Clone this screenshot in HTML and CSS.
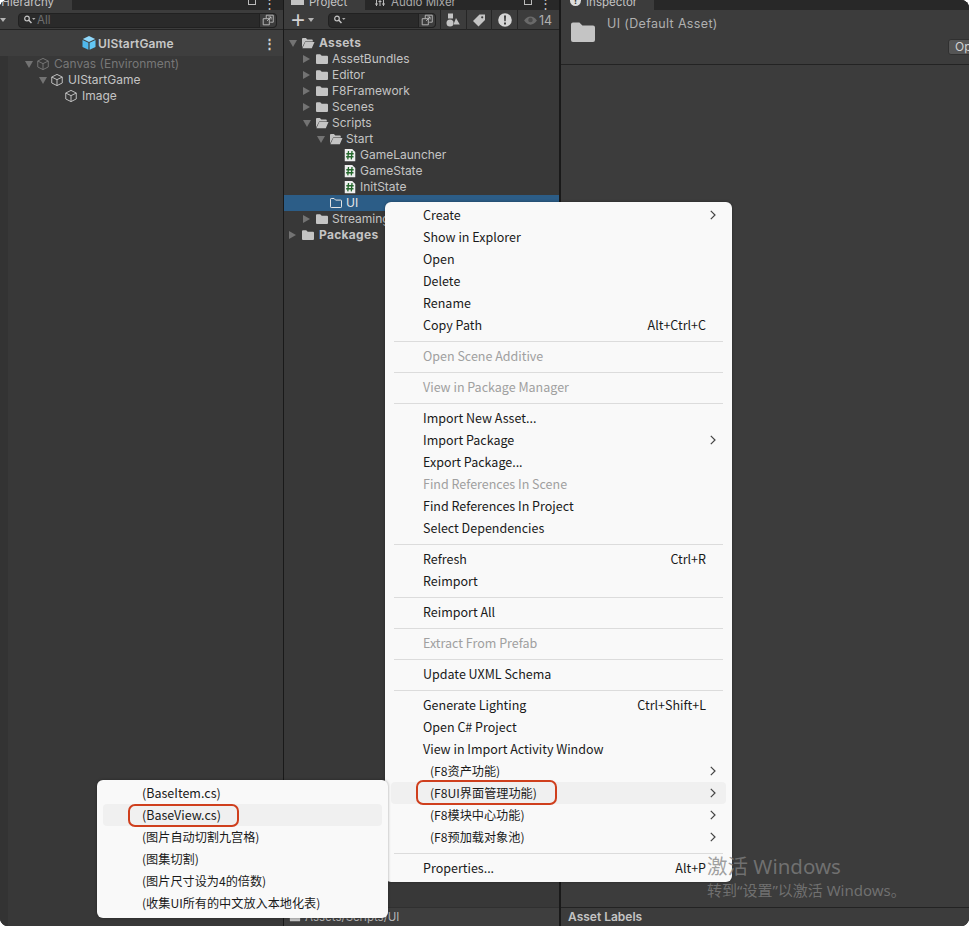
FILE: index.html
```html
<!DOCTYPE html>
<html lang="zh-CN">
<head>
<meta charset="utf-8">
<title>Unity Editor</title>
<link rel="stylesheet" href="styles.css">
</head>
<body>
<svg class="defs" width="0" height="0" aria-hidden="true">
  <defs>
    <symbol id="folder" viewBox="0 0 14 14"><path d="M1 3.2a1 1 0 0 1 1-1h3.2l1.5 1.6H12a1 1 0 0 1 1 1V11a1 1 0 0 1-1 1H2a1 1 0 0 1-1-1z" fill="#c4c4c4"/></symbol>
    <symbol id="folder-open" viewBox="0 0 14 14"><path d="M1 11.6V3a.9.9 0 0 1 .9-.9h3l1.4 1.5h4.6a.9.9 0 0 1 .9.9v.9H4.2zM1.4 12.2l2.9-6.2h9.2l-2.7 6.2z" fill="#c4c4c4"/></symbol>
    <symbol id="folder-line" viewBox="0 0 14 14"><path d="M1.5 3.2a.7.7 0 0 1 .7-.7h2.900l1.500 1.600h5.200a.7.7 0 0 1 .7.7v6a.7.7 0 0 1-.7.7H2.200a.7.7 0 0 1-.7-.7z" fill="none" stroke="#e4e4e4" stroke-width="1"/></symbol>
    <symbol id="cube" viewBox="0 0 16 16"><path d="M8 1.600l6 3v6.800l-6 3-6-3V4.600zM2 4.600l6 3 6-3M8 7.600v6.800" fill="none" stroke="currentColor" stroke-width="1.100" stroke-linejoin="round"/></symbol>
    <symbol id="cube-solid" viewBox="0 0 16 16"><path d="M8 1l6.200 2.900L8 6.900 1.800 3.900z" fill="#8fd8fb"/><path d="M1.500 4.900l5.900 2.900v7L1.500 11.900z" fill="#4fb8ec"/><path d="M14.500 4.900L8.600 7.800v7l5.900-2.900z" fill="#62c6f5"/></symbol>
    <symbol id="script" viewBox="0 0 14 16"><path d="M1 1h8.500L13 4.500V15H1z" fill="#efefef"/><path d="M5.300 3.500L4.500 13M9.300 3.500L8.500 13M2.800 6.600h8.400M2.600 10h8.400" stroke="#25682c" stroke-width="1.500" fill="none"/></symbol>
    <symbol id="linkbox" viewBox="0 0 16 16"><path d="M6 2.500h8v8H10.500M6 2.500V6M2.500 6.500h7v7h-7z" fill="none" stroke="#c4c4c4" stroke-width="1"/><path d="M7 9l4.500-4.500M8.500 4.500h3v3" fill="none" stroke="#c4c4c4" stroke-width="1"/></symbol>
    <symbol id="lens" viewBox="0 0 14 12"><circle cx="5" cy="4.500" r="2.300" fill="none" stroke="#c4c4c4" stroke-width="1.200"/><path d="M6.800 6.300l2.700 2.700" stroke="#c4c4c4" stroke-width="1.500"/><path d="M10 4h3.500l-1.750 2z" fill="#aaa"/></symbol>
    <symbol id="chev" viewBox="0 0 8 12"><path d="M1.800 1.800L6 6l-4.200 4.200" fill="none" stroke="#444" stroke-width="1.200"/></symbol>
  </defs>
</svg>

<div class="app">
  <section class="panel hierarchy">
    <header class="tabbar">
      <div class="tab tab-hierarchy"><span class="tab-label">Hierarchy</span></div>
      <div class="tab-spacer"></div>
      <span class="win-btn"></span><span class="kebab">⋮</span>
    </header>
    <div class="toolbar">
      <span class="drop-tri"></span>
      <div class="search search-wide">
        <svg class="lens"><use href="#lens"/></svg><span class="search-hint">All</span>
        <span class="search-end"><svg class="ic13"><use href="#linkbox"/></svg></span>
      </div>
    </div>
    <div class="scene-head">
      <svg class="ic16"><use href="#cube-solid"/></svg>
      <span class="scene-title">UIStartGame</span>
      <span class="scene-kebab">⋮</span>
    </div>
    <div class="tree-wrap">
      <div class="gutter"></div>
      <ul class="tree">
        <li class="row in-1 muted"><span class="tri down"></span><svg class="ic14"><use href="#cube"/></svg><span>Canvas (Environment)</span></li>
        <li class="row in-2"><span class="tri down"></span><svg class="ic14"><use href="#cube"/></svg><span>UIStartGame</span></li>
        <li class="row in-3"><svg class="ic14"><use href="#cube"/></svg><span>Image</span></li>
      </ul>
    </div>
  </section>

  <section class="panel project">
    <header class="tabbar">
      <div class="tab tab-project"><span class="tab-folder"></span><span class="tab-label">Project</span></div>
      <div class="tab-inactive">
        <svg class="mixer" viewBox="0 0 10 6"><path d="M1.500 0v6M5 0v6M8.500 0v6" stroke="#bbb" stroke-width="1"/><path d="M0 4h3M3.500 1.500h3M7 4h3" stroke="#bbb" stroke-width="1.200"/></svg>
        <span class="tab-label">Audio Mixer</span>
      </div>
      <div class="tab-spacer"></div>
      <span class="win-btn"></span><span class="kebab">⋮</span>
    </header>
    <div class="toolbar project-tools">
      <span class="plus">+</span><span class="drop-tri small"></span>
      <div class="search search-project">
        <svg class="lens"><use href="#lens"/></svg>
        <span class="search-end"><svg class="ic13"><use href="#linkbox"/></svg></span>
      </div>
      <div class="tool-btn"><svg class="ic16" viewBox="0 0 16 16"><circle cx="5" cy="11" r="3.500" fill="#c4c4c4"/><path d="M3 1.500h5v5H3z" fill="#c4c4c4"/><path d="M11 6l3.800 6.500H8.500z" fill="#c4c4c4"/></svg></div>
      <div class="tool-btn"><svg class="ic16" viewBox="0 0 16 16"><path d="M2 9l6.500-6.500H14V8l-6.500 6.500z" fill="#c4c4c4"/><circle cx="11.200" cy="5.300" r="1.100" fill="#3c3c3c"/></svg></div>
      <div class="tool-btn"><svg class="ic16" viewBox="0 0 16 16"><circle cx="8" cy="8" r="6.800" fill="#d6d6d6"/><path d="M7 3.500h2l-.3 5.800H7.300zM7 10.500h2v2H7z" fill="#3c3c3c"/></svg></div>
      <div class="eye-count">
        <svg class="eye" viewBox="0 0 16 12"><path d="M1 6c2-3 4.300-4.500 7-4.500S13 3 15 6c-2 3-4.300 4.500-7 4.500S3 9 1 6z" fill="#6a6a6a"/><circle cx="8" cy="5.500" r="2.500" fill="#4a4a4a"/></svg>
        <span>14</span>
      </div>
    </div>
    <ul class="tree project-tree">
      <li class="row p-0 strong"><span class="tri down"></span><svg class="ic14"><use href="#folder-open"/></svg><span>Assets</span></li>
      <li class="row p-1"><span class="tri right"></span><svg class="ic14"><use href="#folder"/></svg><span>AssetBundles</span></li>
      <li class="row p-1"><span class="tri right"></span><svg class="ic14"><use href="#folder"/></svg><span>Editor</span></li>
      <li class="row p-1"><span class="tri right"></span><svg class="ic14"><use href="#folder"/></svg><span>F8Framework</span></li>
      <li class="row p-1"><span class="tri right"></span><svg class="ic14"><use href="#folder"/></svg><span>Scenes</span></li>
      <li class="row p-1"><span class="tri down"></span><svg class="ic14"><use href="#folder-open"/></svg><span>Scripts</span></li>
      <li class="row p-2"><span class="tri down"></span><svg class="ic14"><use href="#folder-open"/></svg><span>Start</span></li>
      <li class="row p-3"><svg class="ic14 script"><use href="#script"/></svg><span>GameLauncher</span></li>
      <li class="row p-3"><svg class="ic14 script"><use href="#script"/></svg><span>GameState</span></li>
      <li class="row p-3"><svg class="ic14 script"><use href="#script"/></svg><span>InitState</span></li>
      <li class="row p-2b selected"><svg class="ic14"><use href="#folder-line"/></svg><span>UI</span></li>
      <li class="row p-1"><span class="tri right"></span><svg class="ic14"><use href="#folder"/></svg><span>StreamingAssets</span></li>
      <li class="row p-0 strong"><span class="tri right"></span><svg class="ic14"><use href="#folder"/></svg><span>Packages</span></li>
    </ul>
    <div class="spacer"></div>
    <footer class="pathbar"><svg class="ic12"><use href="#folder"/></svg><span>Assets/Scripts/UI</span></footer>
  </section>

  <section class="panel inspector">
    <header class="tabbar">
      <div class="tab tab-inspector"><span class="info-dot">!</span><span class="tab-label">Inspector</span></div>
      <div class="tab-spacer"></div>
    </header>
    <div class="asset-head">
      <svg class="folder-big"><use href="#folder"/></svg>
      <span class="asset-name">UI (Default Asset)</span>
      <button class="open-btn">Open</button>
    </div>
    <div class="spacer"></div>
    <footer class="labels-bar">Asset Labels</footer>
  </section>
</div>

<nav class="menu menu-main">
  <div class="item"><span>Create</span><svg class="chev"><use href="#chev"/></svg></div>
  <div class="item"><span>Show in Explorer</span></div>
  <div class="item"><span>Open</span></div>
  <div class="item"><span>Delete</span></div>
  <div class="item"><span>Rename</span></div>
  <div class="item"><span>Copy Path</span><span class="key">Alt+Ctrl+C</span></div>
  <hr class="sep">
  <div class="item off"><span>Open Scene Additive</span></div>
  <hr class="sep">
  <div class="item off"><span>View in Package Manager</span></div>
  <hr class="sep">
  <div class="item"><span>Import New Asset...</span></div>
  <div class="item"><span>Import Package</span><svg class="chev"><use href="#chev"/></svg></div>
  <div class="item"><span>Export Package...</span></div>
  <div class="item off"><span>Find References In Scene</span></div>
  <div class="item"><span>Find References In Project</span></div>
  <div class="item"><span>Select Dependencies</span></div>
  <hr class="sep">
  <div class="item"><span>Refresh</span><span class="key">Ctrl+R</span></div>
  <div class="item"><span>Reimport</span></div>
  <hr class="sep">
  <div class="item"><span>Reimport All</span></div>
  <hr class="sep">
  <div class="item off"><span>Extract From Prefab</span></div>
  <hr class="sep">
  <div class="item"><span>Update UXML Schema</span></div>
  <hr class="sep">
  <div class="item"><span>Generate Lighting</span><span class="key">Ctrl+Shift+L</span></div>
  <div class="item"><span>Open C# Project</span></div>
  <div class="item"><span>View in Import Activity Window</span></div>
  <div class="item f8 zh"><span>(F8资产功能)</span><svg class="chev"><use href="#chev"/></svg></div>
  <div class="item f8 zh hover"><span>(F8UI界面管理功能)</span><svg class="chev"><use href="#chev"/></svg><i class="mark mark-main"></i></div>
  <div class="item f8 zh"><span>(F8模块中心功能)</span><svg class="chev"><use href="#chev"/></svg></div>
  <div class="item f8 zh"><span>(F8预加载对象池)</span><svg class="chev"><use href="#chev"/></svg></div>
  <hr class="sep">
  <div class="item"><span>Properties...</span><span class="key">Alt+P</span></div>
</nav>

<nav class="menu menu-sub">
  <div class="item"><span>(BaseItem.cs)</span></div>
  <div class="item hover"><span>(BaseView.cs)</span><i class="mark mark-sub"></i></div>
  <div class="item zh"><span>(图片自动切割九宫格)</span></div>
  <div class="item zh"><span>(图集切割)</span></div>
  <div class="item zh"><span>(图片尺寸设为4的倍数)</span></div>
  <div class="item zh"><span>(收集UI所有的中文放入本地化表)</span></div>
</nav>

<aside class="watermark">
  <div class="wm-title">激活 Windows</div>
  <div class="wm-sub">转到“设置”以激活 Windows。</div>
</aside>
</body>
</html>
```
FILE: styles.css
```css
* { box-sizing: border-box; }
html, body { margin: 0; height: 100%; }
body {
  width: 969px;
  height: 926px;
  overflow: hidden;
  background: #fff;
  position: relative;
  font-family: Inter, "Noto Sans CJK SC", sans-serif;
}
.defs { position: absolute; }
ul { list-style: none; margin: 0; padding: 0; }

.app {
  display: flex;
  width: 969px;
  height: 926px;
  background: #191919;
  gap: 1px;
  border-radius: 8px;
  overflow: hidden;
}
.panel { display: flex; flex-direction: column; background: #383838; color: #c4c4c4; font-size: 12px; position: relative; }
.hierarchy { width: 283px; }
.project { width: 275px; }
.inspector { flex: 1; margin-left: 1px; background: #3c3c3c; }
.spacer { flex: 1; }

.tabbar { height: 10px; display: flex; background: #282828; overflow: hidden; align-items: flex-end; flex: none; position: relative; }
.tab { height: 10px; background: #3c3c3c; display: flex; align-items: flex-end; overflow: hidden; flex: none; }
.tab-label { font-size: 11.500px; line-height: 14px; margin-bottom: 1px; white-space: nowrap; color: #c4c4c4; }
.tab-hierarchy { width: 72px; justify-content: flex-end; padding-right: 18px; }
.tab-project { width: 81px; padding-left: 7px; gap: 5px; }
.tab-inspector { width: 93px; padding-left: 9px; gap: 5px; }
.tab-folder { width: 13px; height: 8px; background: #c4c4c4; margin-bottom: 5px; flex: none; }
.tab-inactive { display: flex; align-items: flex-end; gap: 6px; padding-left: 10px; }
.tab-inactive .tab-label { color: #aaa; }
.mixer { width: 10px; height: 6px; margin-bottom: 4px; flex: none; }
.tab-spacer { flex: 1; }
.win-btn { width: 8px; height: 6px; border: 1px solid #bbb; border-top: 0; margin-right: 7px; margin-bottom: 5px; flex: none; }
.kebab { width: 8px; margin-right: 12px; font-size: 13px; line-height: 10px; color: #c4c4c4; margin-bottom: 2px; flex: none; }

.toolbar { height: 20px; background: #3c3c3c; display: flex; align-items: center; flex: none; box-shadow: inset 0 -1px 0 #232323; }
.drop-tri { width: 0; height: 0; border-left: 3.500px solid transparent; border-right: 3.500px solid transparent; border-top: 4px solid #b4b4b4; flex: none; }
.drop-tri.small { margin-left: 4px; }
.search { height: 15px; background: #2a2a2a; border-radius: 4px; border: 1px solid #212121; display: flex; align-items: center; position: relative; color: #6f6f6f; font-size: 11.500px; }
.search-wide { width: 259px; margin-left: 12px; padding-left: 3px; }
.search-project { width: 108px; margin-left: 14px; padding-left: 3px; flex: none; }
.lens { width: 14px; height: 12px; flex: none; margin-right: 1px; }
.search-hint { line-height: 13px; }
.search-end { position: absolute; right: -1px; top: -1px; bottom: -1px; width: 18px; display: flex; align-items: center; justify-content: center; background: #3c3c3c; border: 1px solid #212121; border-radius: 0 4px 4px 0; }
.ic13 { width: 14px; height: 14px; }
.ic12 { width: 12px; height: 12px; flex: none; }
.ic14 { width: 14px; height: 14px; flex: none; }
.ic16 { width: 16px; height: 16px; flex: none; }

.project-tools { padding-left: 7px; }
.plus { font-size: 24px; line-height: 20px; color: #d2d2d2; width: 13px; text-align: center; flex: none; font-family: "Liberation Sans", sans-serif; }
.tool-btn { width: 25.670px; height: 20px; border-left: 1px solid #262626; display: flex; align-items: center; justify-content: center; flex: none; }
.search-project + .tool-btn { margin-left: 4px; }
.eye-count { border-left: 1px solid #262626; height: 20px; display: flex; align-items: center; gap: 1px; padding-left: 5px; font-size: 12.500px; color: #b0b0b0; flex: none; }
.eye { width: 15px; height: 11px; }

.scene-head { height: 26px; background: #3e3e3e; display: flex; align-items: center; padding-left: 81px; gap: 1px; font-weight: 600; color: #c8c8c8; flex: none; position: relative; }
.scene-title { font-size: 12px; letter-spacing: .15px; }
.scene-kebab { position: absolute; right: 7px; top: 6px; font-size: 13px; line-height: 14px; color: #d2d2d2; }
.tree-wrap { flex: 1; display: flex; }
.gutter { width: 8px; background: #333; }
.tree { flex: 1; }
.row { height: 16px; display: flex; align-items: center; gap: 2px; font-size: 12px; white-space: nowrap; color: #c4c4c4; position: relative; }
.row > span:last-child { margin-left: 1px; margin-bottom: 2px; }
.tree-wrap .row > span:last-child { margin-left: 2px; }
.muted { color: #777; }
.muted svg { color: #777; }
.tri { width: 10px; height: 10px; flex: none; position: relative; }
.tri.down::before { content: ""; position: absolute; left: 1px; top: 2px; border-left: 4.500px solid transparent; border-right: 4.500px solid transparent; border-top: 7px solid #737373; }
.tri.right::before { content: ""; position: absolute; left: 1px; top: 1px; border-top: 4.500px solid transparent; border-bottom: 4.500px solid transparent; border-left: 7px solid #737373; }
.in-1 { padding-left: 16px; }
.in-2 { padding-left: 30px; }
.in-3 { padding-left: 56px; }
.project-tree { flex: none; padding-top: 5px; }
.project-tree .tri { margin-right: 1px; }
.p-0 { padding-left: 4px; }
.p-1 { padding-left: 18px; }
.p-2 { padding-left: 32px; }
.p-2b { padding-left: 45px; }
.p-3 { padding-left: 59px; }
.strong { font-weight: 700; letter-spacing: .3px; }
.strong > span:last-child { margin-left: 2px; }
.selected { background: #2c5d87; color: #e6e6e6; }
.pathbar { height: 19px; background: #3e3e3e; display: flex; align-items: center; gap: 4px; padding-left: 5px; color: #b4b4b4; font-size: 11.500px; border-top: 1px solid #303030; flex: none; }
.labels-bar { height: 19px; background: #3c3c3c; border-top: 1px solid #232323; padding-left: 7px; font-size: 12px; font-weight: 600; line-height: 18px; color: #c4c4c4; flex: none; }
.info-dot { width: 11px; height: 11px; border-radius: 50%; background: #ddd; color: #333; font-size: 9px; line-height: 11px; text-align: center; font-weight: 700; flex: none; margin-bottom: 4px; }

.asset-head { height: 55px; position: relative; border-bottom: 1px solid #232323; flex: none; }
.folder-big { position: absolute; left: 8px; top: 8px; width: 28px; height: 28px; }
.asset-name { position: absolute; left: 46px; top: 6px; font-size: 12.500px; letter-spacing: .35px; color: #b0b0b0; }
.open-btn { position: absolute; left: 387px; top: 29px; width: 40px; height: 16px; padding: 0 0 0 6px; text-align: left; background: #555; border: 1px solid #303030; border-radius: 3px; color: #d2d2d2; font: 12px/14px Inter, sans-serif; }

.menu {
  position: absolute;
  background: #f9f9f9;
  border-radius: 6px;
  box-shadow: 0 0 3px rgba(0, 0, 0, .35);
  font-family: "Noto Sans CJK SC", "Noto Sans", sans-serif;
  font-size: 12.500px;
  color: #1a1a1a;
}
.menu-main { left: 385px; top: 202px; width: 347px; height: 680px; padding: 2px 6px 3px; }
.menu-sub { left: 97px; top: 780px; width: 291px; height: 138px; padding: 2px 6px; }
.item { height: 22px; display: flex; align-items: center; border-radius: 4px; position: relative; white-space: nowrap; }
.item > span { margin-bottom: 2px; }
.zh { font-size: 12.150px; }
.menu-main .item { padding-left: 32px; padding-right: 9px; }
.menu-main .item.f8 { padding-left: 39px; }
.menu-sub .item { padding-left: 39px; }
.item > span:first-child { flex: 1; }
.menu-main .key { flex: none; margin-right: 11px; }
.off { color: #a0a0a0; }
.hover { background: #f0f0f0; }
.chev { width: 8px; height: 12px; flex: none; }
.sep { height: 1px; margin: 5px 3px 3px; border: 0; background: #dcdcdc; }
.mark { position: absolute; border: 2px solid #cf3f1d; border-radius: 7px; pointer-events: none; }
.mark-main { left: 25px; top: -2px; width: 141px; height: 25px; }
.mark-sub { left: 25px; top: 0; width: 111px; height: 23px; }

.watermark { position: absolute; left: 707px; top: 854px; color: rgba(130, 130, 130, .75); font-family: "Noto Sans", "Noto Sans CJK SC", sans-serif; pointer-events: none; white-space: nowrap; }
.wm-title { font-size: 20.500px; line-height: 24px; }
.wm-sub { font-size: 15px; line-height: 20px; margin-top: 2px; }
```
